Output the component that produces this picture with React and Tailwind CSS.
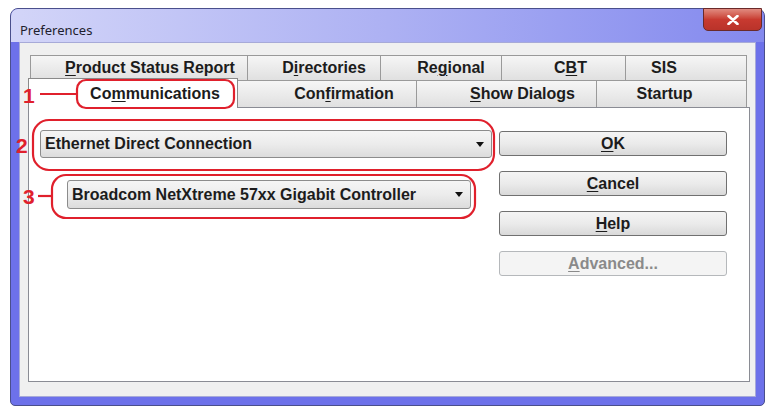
import React from "react";

const F = { fontFamily: '"Liberation Sans", Arial, sans-serif' };

function U({ children }) {
  return <span className="underline underline-offset-2 decoration-1">{children}</span>;
}

function Tab({ w, className = "", children }) {
  return (
    <div
      className={`flex items-center justify-center h-full border border-b-0 border-[#9a9a9a] bg-gradient-to-b from-[#f6f6f6] to-[#e0e0e0] text-[16px] font-bold text-[#1c1c1c] -ml-px first:ml-0 ${className}`}
      style={{ width: w }}
    >
      {children}
    </div>
  );
}

function Btn({ children, disabled }) {
  return (
    <div
      className={`h-[25px] w-[228px] rounded-[3px] border flex items-center justify-center text-[16px] font-bold ${
        disabled
          ? "border-[#b5b8bb] bg-[#f4f4f4] text-[#8a8a8a]"
          : "border-[#707070] bg-gradient-to-b from-[#f4f4f4] via-[#ebebeb] to-[#d9d9d9] text-[#1c1c1c]"
      }`}
    >
      {children}
    </div>
  );
}

function Select({ w, h, children }) {
  return (
    <div
      className="flex items-center justify-between rounded-[3px] border border-[#8c8c8c] bg-gradient-to-b from-[#f5f5f5] via-[#ececec] to-[#dcdcdc] pl-[4px] pr-[7px] text-[16px] font-bold text-[#1c1c1c]"
      style={{ width: w, height: h }}
    >
      <span>{children}</span>
      <svg width="8" height="5" viewBox="0 0 8 5">
        <path d="M0 0 L8 0 L4 5 Z" fill="#111" />
      </svg>
    </div>
  );
}

export default function App() {
  return (
    <div className="relative w-[768px] h-[409px] bg-white overflow-hidden" style={F}>
      <div className="ml-[10px] mt-[8px] w-[755px] h-[398px] rounded-t-[8px] rounded-b-[5px] border border-[#4a4f8c] bg-[#6d71ea] flex flex-col px-[8px] pb-[8px]">
        <div className="-mx-[8px] px-[9px] h-[33px] rounded-t-[7px] bg-gradient-to-r from-[#d3d5f8] via-[#adb1f3] to-[#8489ee] flex justify-between items-start">
          <div className="pt-[12px] text-[13px] text-[#1e1e2e]" style={{ fontFamily: '"Noto Sans", sans-serif' }}>
            Preferences
          </div>
          <div className="-mt-px -mr-[7px] w-[59px] h-[23px] rounded-b-[5px] border border-[#6a2a2a] bg-gradient-to-b from-[#e08a80] via-[#c83a30] to-[#b9332a] flex items-center justify-center">
            <svg width="12" height="10" viewBox="0 0 12 10">
              <path d="M1.5 1 L10.5 9 M10.5 1 L1.5 9" stroke="#fff" strokeWidth="2.6" strokeLinecap="round" />
            </svg>
          </div>
        </div>
        <div className="flex-1 bg-[#f0f0f0] border border-[#a7aad8] pl-[10px] pt-[12px]">
          <div className="flex h-[25px]">
            <Tab w={218} className="pl-[22px]"><span><U>P</U>roduct Status Report</span></Tab>
            <Tab w={134} className="pl-[20px]"><span>D<U>i</U>rectories</span></Tab>
            <Tab w={122} className="pl-[20px]"><span>Re<U>g</U>ional</span></Tab>
            <Tab w={125} className="pl-[14px]"><span>C<U>B</U>T</span></Tab>
            <Tab w={122} className="pr-[44px]"><span>SIS</span></Tab>
          </div>
          <div className="flex items-end h-[27px] -ml-[2px]">
            <div className="relative z-10 h-[30px] -mb-px w-[210px] flex items-center justify-center pl-[44px] border border-b-0 border-[#8a8a8a] bg-white text-[16px] font-bold text-[#1c1c1c]">
              <span>Co<U>m</U>munications</span>
            </div>
            <Tab w={180} className="pl-[34px] -ml-px">
              <span>Con<U>f</U>irmation</span>
            </Tab>
            <Tab w={181} className="pl-[32px]"><span><U>S</U>how Dialogs</span></Tab>
            <Tab w={151} className="pr-[14px]"><span>Startup</span></Tab>
          </div>
          <div className="-ml-[2px] w-[722px] h-[275px] bg-white border border-[#8a8c94] flex">
            <div className="pl-[11px] pt-[22px] flex flex-col">
              <Select w={452} h={28}>Ethernet Direct Connection</Select>
              <div className="mt-[22px] ml-[27px]">
                <Select w={404} h={29}>Broadcom NetXtreme 57xx Gigabit Controller</Select>
              </div>
            </div>
            <div className="ml-[7px] pt-[23px] flex flex-col gap-[15px]">
              <Btn><span><U>O</U>K</span></Btn>
              <Btn><span><U>C</U>ancel</span></Btn>
              <Btn><span><U>H</U>elp</span></Btn>
              <Btn disabled><span><U>A</U>dvanced...</span></Btn>
            </div>
          </div>
        </div>
      </div>

      <svg className="absolute inset-0 z-20 pointer-events-none" width="768" height="409" viewBox="0 0 768 409">
        <g fill="none" stroke="#e0202c" strokeWidth="2.2">
          <rect x="77" y="80" width="157" height="28" rx="9" />
          <line x1="40" y1="94" x2="77" y2="94" />
          <rect x="33" y="120" width="461" height="50" rx="16" />
          <rect x="52" y="175" width="423" height="43" rx="14" />
          <line x1="38" y1="196" x2="52" y2="196" />
        </g>
        <g fill="#e0202c" fontFamily='"Liberation Sans", Arial, sans-serif' fontSize="21" fontWeight="bold">
          <text x="23" y="103">1</text>
          <text x="16" y="153">2</text>
          <text x="23" y="204">3</text>
        </g>
      </svg>
    </div>
  );
}
